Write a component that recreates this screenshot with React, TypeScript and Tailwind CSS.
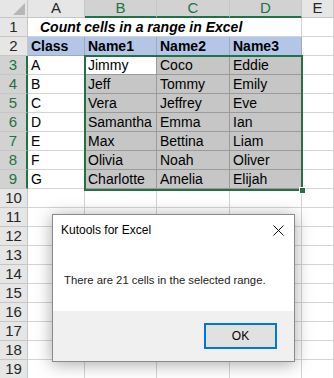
import React from "react";

const COLS = [
  { key: "A", w: 57, sel: false },
  { key: "B", w: 72, sel: true },
  { key: "C", w: 73, sel: true },
  { key: "D", w: 72, sel: true },
  { key: "E", w: 32, sel: false },
];

const DATA: string[][] = [
  ["A", "Jimmy", "Coco", "Eddie"],
  ["B", "Jeff", "Tommy", "Emily"],
  ["C", "Vera", "Jeffrey", "Eve"],
  ["D", "Samantha", "Emma", "Ian"],
  ["E", "Max", "Bettina", "Liam"],
  ["F", "Olivia", "Noah", "Oliver"],
  ["G", "Charlotte", "Amelia", "Elijah"],
];

const cellFont = { fontFamily: '"Liberation Sans", Arial, sans-serif' };

function RowHead({ n, sel }: { n: number; sel?: boolean }) {
  return (
    <div
      className={
        "flex h-[19px] w-[28px] shrink-0 items-center justify-center border-b border-r text-[15px] " +
        (sel
          ? "border-b-[#c6c6c6] border-r-2 border-r-[#217346] bg-[#d2d2d2] text-[#217346]"
          : "border-[#c6c6c6] bg-[#e6e6e6] text-[#262626]")
      }
      style={cellFont}
    >
      {n}
    </div>
  );
}

function Cell({
  w,
  children,
  className = "",
}: {
  w: number;
  children?: React.ReactNode;
  className?: string;
}) {
  return (
    <div
      className={
        "flex h-[19px] shrink-0 items-center overflow-visible whitespace-nowrap border-b border-r pl-[3px] text-[14px] leading-none text-black " +
        className
      }
      style={{ ...cellFont, width: w }}
    >
      {children}
    </div>
  );
}

export default function App() {
  return (
    <div className="relative h-[378px] w-[334px] overflow-hidden bg-white">
      {/* column headers */}
      <div className="flex h-[18px]">
        <div className="relative h-[18px] w-[28px] shrink-0 border-b border-r border-[#c6c6c6] bg-[#e6e6e6]">
          <svg className="absolute bottom-[2px] right-[2px]" width="12" height="12" viewBox="0 0 12 12">
            <polygon points="12,0 12,12 0,12" fill="#b7b7b7" />
          </svg>
        </div>
        {COLS.map((c) => (
          <div
            key={c.key}
            className={
              "flex h-[18px] shrink-0 items-center justify-center border-r text-[15px] " +
              (c.sel
                ? "border-b-2 border-b-[#217346] border-r-[#c6c6c6] bg-[#d2d2d2] text-[#217346]"
                : "border-b border-[#c6c6c6] bg-[#e6e6e6] text-[#262626]")
            }
            style={{ ...cellFont, width: c.w }}
          >
            {c.key}
          </div>
        ))}
      </div>

      {/* row 1 */}
      <div className="flex">
        <RowHead n={1} />
        <div
          className="flex h-[19px] w-[274px] shrink-0 items-center border-b border-r border-[#d4d4d4] pl-[12px] text-[14px] font-bold italic text-black"
          style={cellFont}
        >
          Count cells in a range in Excel
        </div>
        <Cell w={32} className="border-[#d4d4d4]" />
      </div>

      {/* row 2 */}
      <div className="flex">
        <RowHead n={2} />
        {["Class", "Name1", "Name2", "Name3"].map((t, i) => (
          <Cell key={t} w={COLS[i].w} className="border-[#9fa9bb] bg-[#b4c6e7] font-bold">
            {t}
          </Cell>
        ))}
        <Cell w={32} className="border-[#d4d4d4]" />
      </div>

      {/* rows 3-9 */}
      {DATA.map((r, ri) => (
        <div key={ri} className="flex">
          <RowHead n={ri + 3} sel />
          {r.map((t, ci) => (
            <Cell
              key={ci}
              w={COLS[ci].w}
              className={
                ci === 0
                  ? "border-[#d4d4d4]"
                  : ri === 0 && ci === 1
                  ? "border-[#9b9b9b] bg-white"
                  : "border-[#9b9b9b] bg-[#c6c6c6]"
              }
            >
              {t}
            </Cell>
          ))}
          <Cell w={32} className="border-[#d4d4d4]" />
        </div>
      ))}

      {/* rows 10-19 */}
      {Array.from({ length: 10 }, (_, i) => (
        <div key={i} className="flex">
          <RowHead n={i + 10} />
          {COLS.map((c) => (
            <Cell key={c.key} w={c.w} className="border-[#d4d4d4]" />
          ))}
        </div>
      ))}

      {/* selection border */}
      <div className="pointer-events-none absolute left-[84px] top-[55px] h-[136px] w-[219px] border-2 border-[#217346]" />
      <div className="absolute left-[299px] top-[187px] h-[7px] w-[7px] border border-white bg-[#217346]" />

      {/* dialog */}
      <div
        className="absolute left-[52px] top-[214px] flex h-[148px] w-[243px] flex-col border border-[#8a8a8a] bg-white shadow-[0_2px_16px_rgba(0,0,0,0.35)]"
        style={cellFont}
      >
        <div className="flex h-[30px] items-center justify-between pl-[8px] pr-[8px]">
          <span className="text-[12px] text-black">Kutools for Excel</span>
          <svg width="11" height="11" viewBox="0 0 11 11" className="mr-[2px]">
            <path d="M0.5 0.5 L10.5 10.5 M10.5 0.5 L0.5 10.5" stroke="#111" strokeWidth="1" />
          </svg>
        </div>
        <div className="flex flex-1 items-start pl-[11px] pt-[27px] text-[11.3px] text-[#222]">
          There are 21 cells in the selected range.
        </div>
        <div className="flex h-[50px] items-center justify-end bg-[#f0f0f0] pr-[17px]">
          <div className="flex h-[26px] w-[73px] items-center justify-center border-2 border-[#0078d7] bg-[#e1e1e1] text-[12px] text-black">
            OK
          </div>
        </div>
      </div>
    </div>
  );
}
